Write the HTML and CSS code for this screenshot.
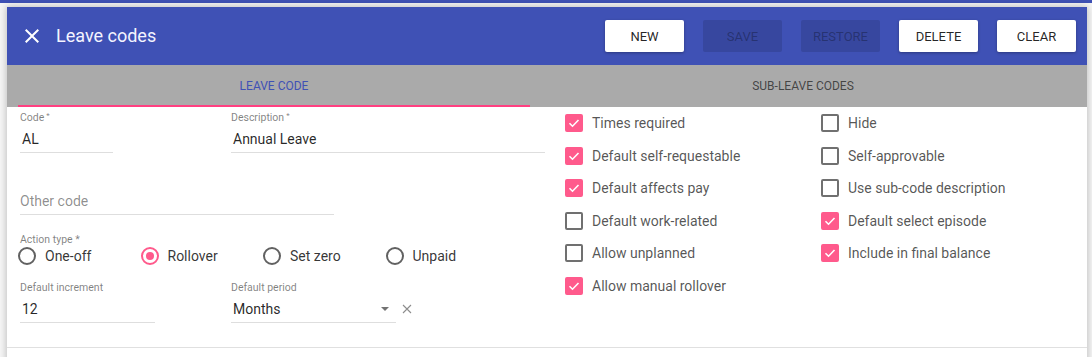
FILE: index.html
```html
<!DOCTYPE html>
<html lang="en">
<head>
<meta charset="utf-8">
<title>Leave codes</title>
<link rel="stylesheet" href="styles.css">
</head>
<body>
<div class="topbar"></div>
<div class="stage">
  <div class="dialog">
    <header class="dlg-head">
      <button class="close" aria-label="Close">
        <svg width="24" height="24" viewBox="0 0 24 24"><path fill="#fff" d="M19 6.41L17.59 5 12 10.59 6.41 5 5 6.41 10.59 12 5 17.59 6.41 19 12 13.41 17.59 19 19 17.59 13.41 12z"/></svg>
      </button>
      <h1 class="title">Leave codes</h1>
      <div class="actions">
        <button class="btn">NEW</button>
        <button class="btn btn-disabled">SAVE</button>
        <button class="btn btn-disabled">RESTORE</button>
        <button class="btn">DELETE</button>
        <button class="btn">CLEAR</button>
      </div>
    </header>
    <nav class="tabs">
      <div class="tab tab-active">LEAVE CODE</div>
      <div class="tab tab-wide">SUB-LEAVE CODES</div>
    </nav>
    <div class="body">
      <div class="form">
        <div class="row">
          <div class="col-a">
            <div class="field w-code">
              <span class="field-label">Code<sup>*</sup></span>
              <span class="field-value">AL</span>
            </div>
          </div>
          <div class="field w-desc">
            <span class="field-label">Description<sup>*</sup></span>
            <span class="field-value">Annual Leave</span>
          </div>
        </div>
        <div class="row row-gap">
          <div class="field w-desc">
            <span class="field-label"></span>
            <span class="field-value placeholder">Other code</span>
          </div>
        </div>
        <div class="radio-block">
          <span class="field-label">Action type *</span>
          <div class="radios">
            <label class="radio"><span class="circle"></span><span class="radio-text">One-off</span></label>
            <label class="radio"><span class="circle circle-on"></span><span class="radio-text">Rollover</span></label>
            <label class="radio"><span class="circle"></span><span class="radio-text">Set zero</span></label>
            <label class="radio"><span class="circle"></span><span class="radio-text">Unpaid</span></label>
          </div>
        </div>
        <div class="row row-last">
          <div class="col-a">
            <div class="field w-inc">
              <span class="field-label">Default increment</span>
              <span class="field-value">12</span>
            </div>
          </div>
          <div class="field w-period">
            <span class="field-label">Default period</span>
            <span class="field-value select-value">Months<span class="arrow"></span></span>
          </div>
          <svg class="clear-x" width="10" height="10" viewBox="0 0 10 10"><path d="M1 1L9 9M9 1L1 9" stroke="rgba(0,0,0,.45)" stroke-width="1.1" fill="none"/></svg>
        </div>
      </div>
      <div class="checks">
        <div class="check-col">
          <div class="check"><span class="box box-on"><svg width="18" height="18" viewBox="0 0 18 18"><path d="M4.5 9.2l3 3 6-6.2" fill="none" stroke="#fff" stroke-width="1.6"/></svg></span>Times required</div>
          <div class="check"><span class="box box-on"><svg width="18" height="18" viewBox="0 0 18 18"><path d="M4.5 9.2l3 3 6-6.2" fill="none" stroke="#fff" stroke-width="1.6"/></svg></span>Default self-requestable</div>
          <div class="check"><span class="box box-on"><svg width="18" height="18" viewBox="0 0 18 18"><path d="M4.5 9.2l3 3 6-6.2" fill="none" stroke="#fff" stroke-width="1.6"/></svg></span>Default affects pay</div>
          <div class="check"><span class="box"></span>Default work-related</div>
          <div class="check"><span class="box"></span>Allow unplanned</div>
          <div class="check"><span class="box box-on"><svg width="18" height="18" viewBox="0 0 18 18"><path d="M4.5 9.2l3 3 6-6.2" fill="none" stroke="#fff" stroke-width="1.6"/></svg></span>Allow manual rollover</div>
        </div>
        <div class="check-col">
          <div class="check"><span class="box"></span>Hide</div>
          <div class="check"><span class="box"></span>Self-approvable</div>
          <div class="check"><span class="box"></span>Use sub-code description</div>
          <div class="check"><span class="box box-on"><svg width="18" height="18" viewBox="0 0 18 18"><path d="M4.5 9.2l3 3 6-6.2" fill="none" stroke="#fff" stroke-width="1.6"/></svg></span>Default select episode</div>
          <div class="check"><span class="box box-on"><svg width="18" height="18" viewBox="0 0 18 18"><path d="M4.5 9.2l3 3 6-6.2" fill="none" stroke="#fff" stroke-width="1.6"/></svg></span>Include in final balance</div>
        </div>
      </div>
    </div>
    <div class="footer"></div>
  </div>
</div>
</body>
</html>
```

FILE: styles.css
```css
* { box-sizing: border-box; }
html, body { margin: 0; padding: 0; }
body {
  background: #fff;
  font-family: Roboto, "Liberation Sans", Arial, sans-serif;
  width: 1092px;
  height: 357px;
  overflow: hidden;
}
.topbar { height: 3px; background: #3f51b5; }
.stage {
  padding: 4px 5px 0 7px;
  background: #f6f6f6;
}
.dialog {
  background: #fff;
  box-shadow: 0 0 7px 1px rgba(0,0,0,.22);
  height: 360px;
}
.dlg-head {
  height: 58px;
  background: #3f51b5;
  display: flex;
  align-items: center;
  padding: 0 11px 0 13px;
}
.close {
  width: 24px; height: 24px; padding: 0; margin: 0;
  border: 0; background: transparent; display: flex;
}
.title {
  margin: 0 0 0 12px;
  font-size: 18px;
  font-weight: 400;
  color: #f4f4ff;
  line-height: 24px;
}
.actions { margin-left: auto; display: flex; gap: 19px; }
.btn {
  width: 79px; height: 32px;
  border: 0; border-radius: 2px;
  background: #fff;
  font-family: Roboto, "Liberation Sans", Arial, sans-serif;
  font-size: 13px; font-weight: 400;
  color: rgba(0,0,0,.87);
  box-shadow: 0 1px 3px rgba(0,0,0,.3);
  padding: 0;
}
.btn-disabled {
  background: rgba(0,0,0,.12);
  color: rgba(0,0,0,.3);
  box-shadow: none;
}
.tabs {
  height: 42px;
  background: #aaaaaa;
  display: flex;
  padding: 0 11px;
}
.tab {
  flex: 0 0 512px;
  display: flex; align-items: center; justify-content: center;
  font-size: 12px;
  color: rgba(0,0,0,.62);
  border-bottom: 2px solid transparent;
  padding-top: 2px;
}
.tab-wide { flex: 1 1 auto; }
.tab-active { color: #3f51b5; border-bottom-color: #ff4081; }
.body {
  display: flex;
  padding-left: 13px;
}
.form {
  width: 525px;
  padding-top: 5px;
  padding-bottom: 24px;
}
.row { display: flex; align-items: flex-end; }
.row-gap { margin-top: 21px; }
.col-a { width: 211px; }
.field {
  display: flex; flex-direction: column;
  border-bottom: 1px solid #dedede;
}
.w-code { width: 93px; }
.w-desc { width: 314px; }
.w-inc { width: 135px; }
.w-period { width: 165px; }
.field-label {
  font-size: 10.5px; line-height: 12px; height: 12px;
  color: rgba(0,0,0,.5);
}
.field-label sup { font-size: 8px; vertical-align: 3px; line-height: 0; margin-left: 2px; }
.field-value {
  font-size: 14px; line-height: 20px;
  margin-top: 5px; padding: 0 0 3px 2px;
  color: rgba(0,0,0,.85);
}
.placeholder { color: rgba(0,0,0,.45); padding-left: 0; }
.select-value { display: flex; align-items: center; }
.arrow {
  margin-left: auto; margin-right: 7px;
  width: 0; height: 0;
  border-left: 4px solid transparent;
  border-right: 4px solid transparent;
  border-top: 4px solid rgba(0,0,0,.55);
}
.clear-x {
  margin: 0 0 9px 6px;
  flex: none;
}
.radio-block { margin-top: 19px; display: flex; flex-direction: column; }
.radios { display: grid; grid-template-columns: repeat(4, 122.5px); margin-top: 1px; margin-left: -2px; }
.radio { display: flex; align-items: center; height: 18px; }
.circle {
  width: 18px; height: 18px; border-radius: 50%;
  border: 2px solid rgba(0,0,0,.62);
  display: flex; align-items: center; justify-content: center;
  flex: none;
}
.circle-on { border-color: #ff5a8c; }
.circle-on::after {
  content: ""; width: 8px; height: 8px; border-radius: 50%; background: #ff5a8c;
}
.radio-text { margin-left: 9px; font-size: 14px; color: rgba(0,0,0,.8); }
.row-last { margin-top: 17px; }
.checks { display: flex; margin-left: 20px; }
.check-col { width: 256px; display: flex; flex-direction: column; }
.check {
  height: 32.5px; display: flex; align-items: center;
  font-size: 14px; color: rgba(0,0,0,.68);
}
.box {
  width: 18px; height: 18px; border-radius: 2px;
  border: 2px solid rgba(0,0,0,.56);
  margin-right: 9px; flex: none; position: relative;
}
.box-on { background: #ff5a8c; border-color: #ff5a8c; }
.box-on svg { position: absolute; left: -2px; top: -2px; }
.footer { border-top: 1px solid #e0e0e0; height: 20px; }
```
